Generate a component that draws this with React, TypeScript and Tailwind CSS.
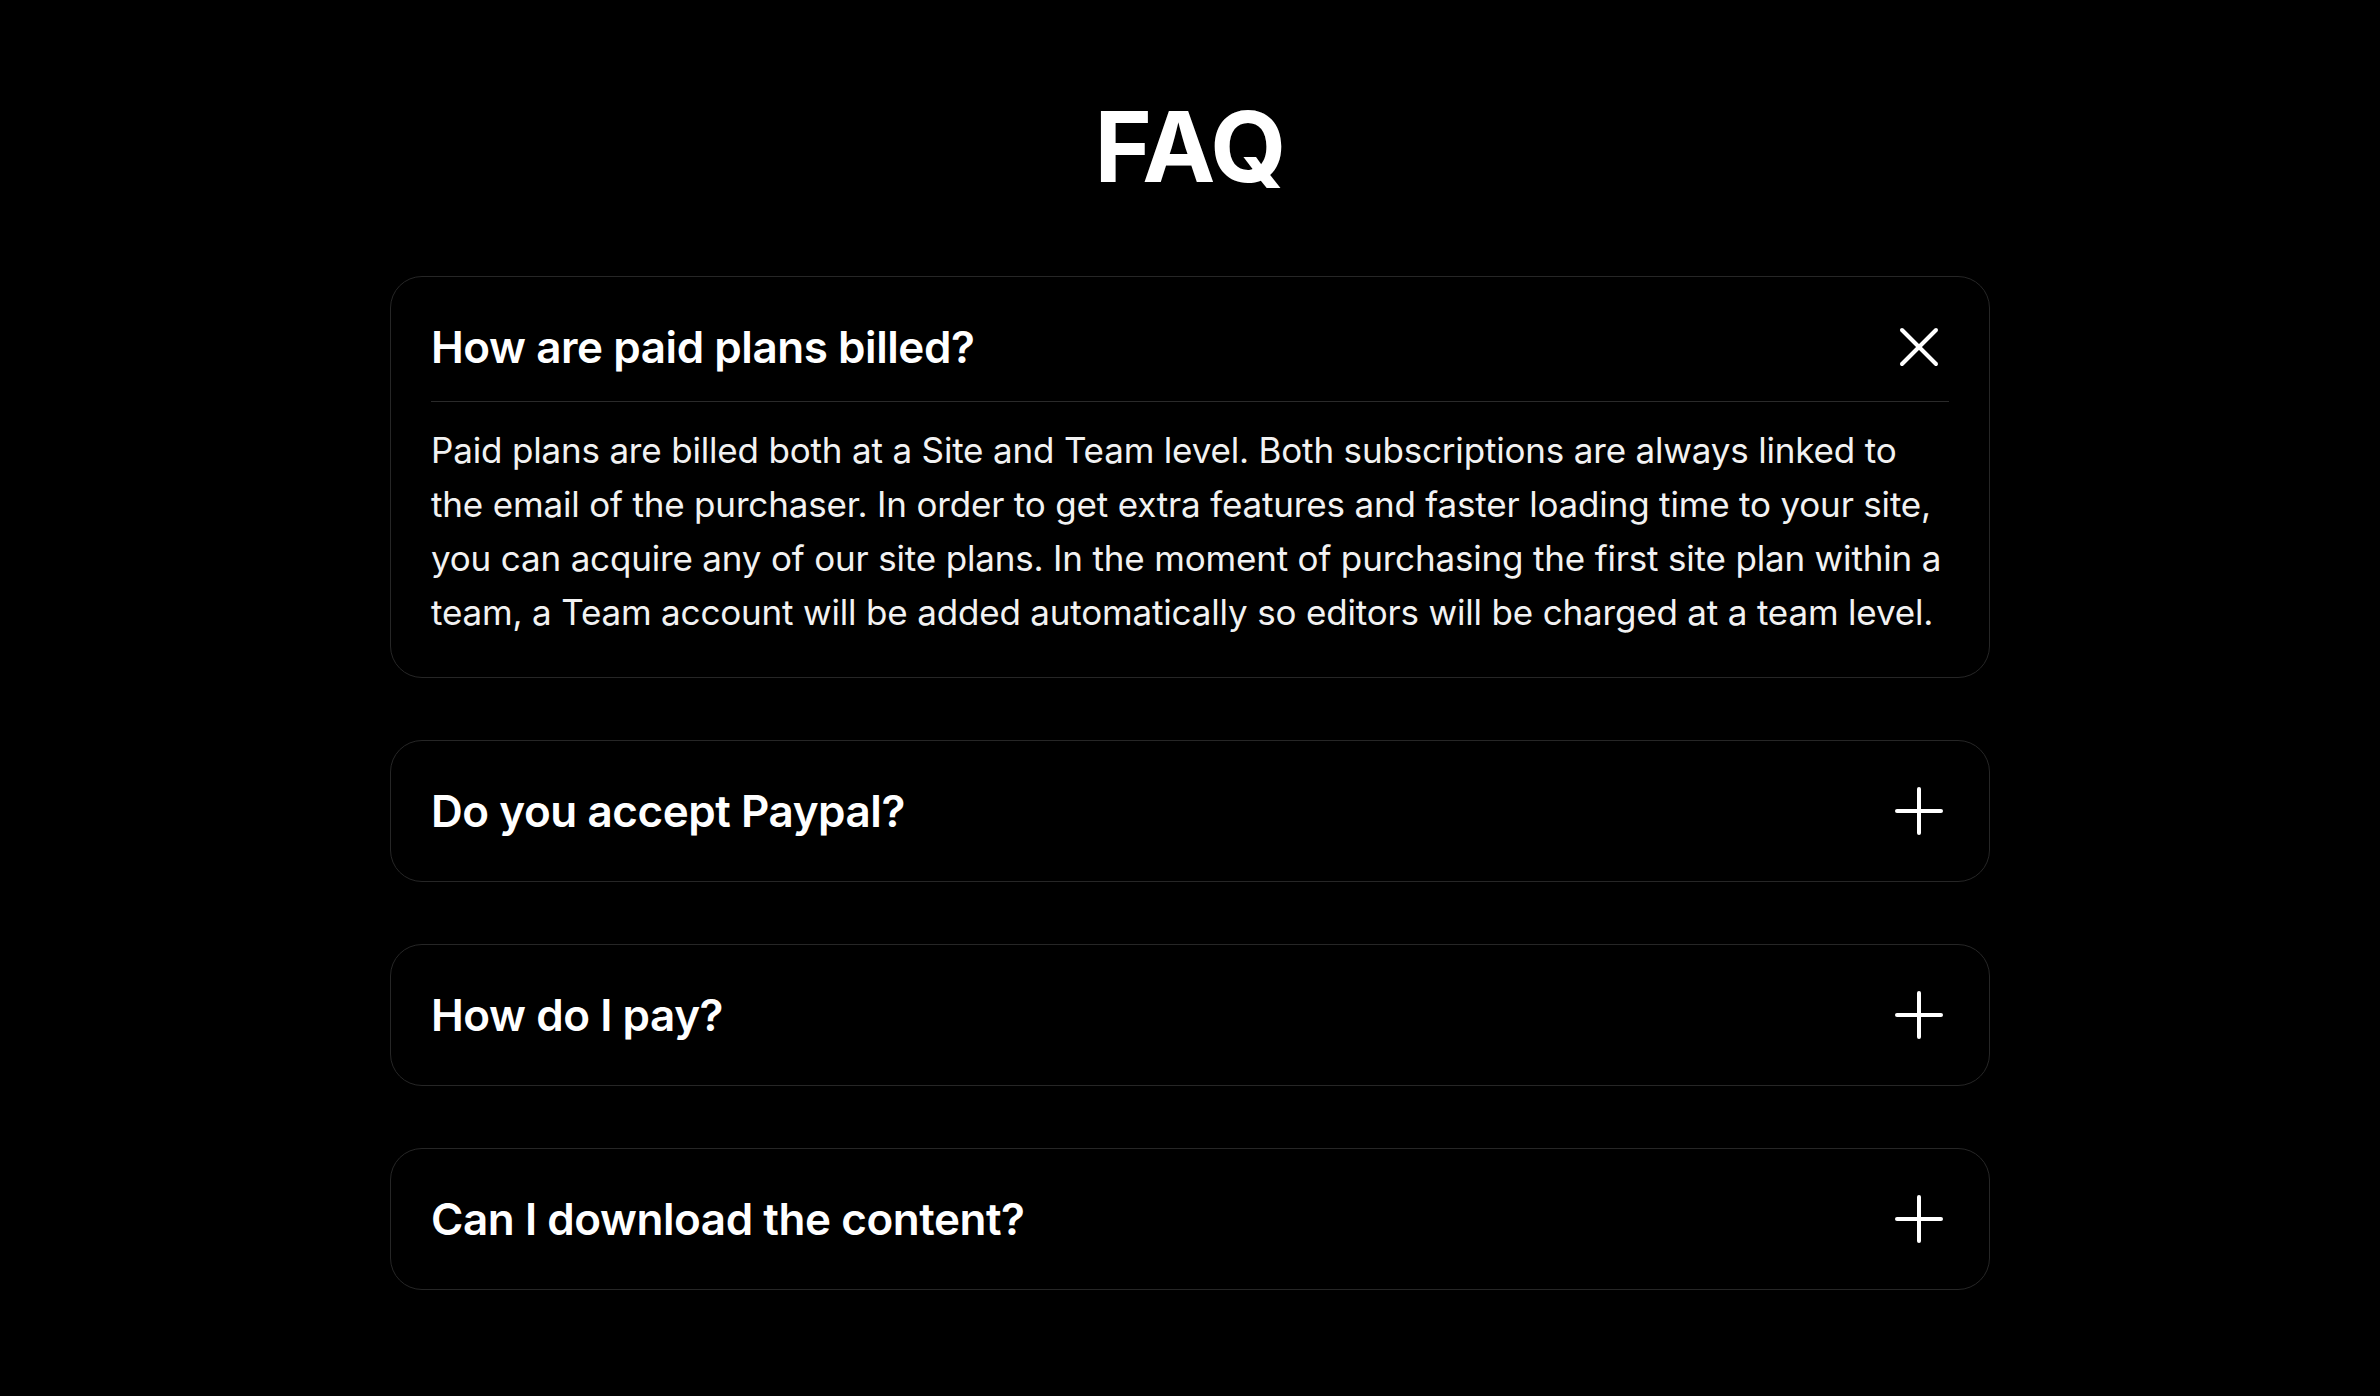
import React from "react";

const answerLines = [
  "Paid plans are billed both at a Site and Team level. Both subscriptions are always linked to",
  "the email of the purchaser. In order to get extra features and faster loading time to your site,",
  "you can acquire any of our site plans. In the moment of purchasing the first site plan within a",
  "team, a Team account will be added automatically so editors will be charged at a team level.",
];

const faqs = [
  { q: "How are paid plans billed?", open: true },
  { q: "Do you accept Paypal?", open: false },
  { q: "How do I pay?", open: false },
  { q: "Can I download the content?", open: false },
];

function PlusIcon() {
  return (
    <svg width="48" height="48" viewBox="0 0 48 48" fill="none" stroke="white" strokeWidth="4" strokeLinecap="round">
      <path d="M2 24H46" />
      <path d="M24 2V46" />
    </svg>
  );
}

function XIcon() {
  return (
    <svg width="48" height="48" viewBox="0 0 48 48" fill="none" stroke="white" strokeWidth="4" strokeLinecap="round">
      <path d="M7 7L41 41" />
      <path d="M41 7L7 41" />
    </svg>
  );
}

export default function App() {
  return (
    <div
      className="min-h-screen w-full bg-black text-white flex flex-col items-center pt-[99px] pb-[100px]"
      style={{ fontFamily: "Inter, 'Noto Sans', sans-serif" }}
    >
      <h1 className="text-[98px] leading-[96px] font-bold tracking-[-0.01em]">FAQ</h1>
      <div className="mt-[81px] w-[1600px] flex flex-col gap-[62px]">
        {faqs.map((f) => (
          <div key={f.q} className="rounded-[32px] border-[1.5px] border-[#262626] bg-black">
            <div className={`flex items-center justify-between pl-10 pr-[46px] pt-[36px] ${f.open ? "pb-[20px]" : "pb-[36px]"}`}>
              <span className="text-[44px] leading-[68px] font-semibold tracking-[-0.01em]">{f.q}</span>
              {f.open ? <XIcon /> : <PlusIcon />}
            </div>
            {f.open && (
              <>
                <div className="mx-10 h-px bg-[#2a2a2a]" />
                <p className="px-10 pt-[21px] pb-[38px] text-[35px] leading-[54px] font-normal tracking-[-0.005em] text-[#f2f2f2] whitespace-nowrap">
                  {answerLines.map((l, i) => (
                    <span key={i} className="block">{l}</span>
                  ))}
                </p>
              </>
            )}
          </div>
        ))}
      </div>
    </div>
  );
}
